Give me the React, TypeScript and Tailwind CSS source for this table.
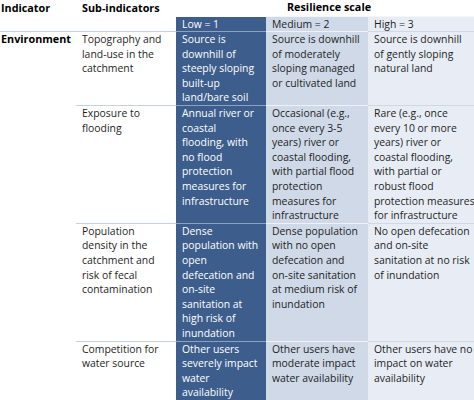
import React from "react";

type Row = {
  indicator?: string;
  sub: string[];
  low: string[];
  medium: string[];
  high: string[];
};

const rows: Row[] = [
  {
    indicator: "Environment",
    sub: ["Topography and", "land-use in the", "catchment"],
    low: ["Source is", "downhill of", "steeply sloping", "built-up", "land/bare soil"],
    medium: ["Source is downhill", "of moderately", "sloping managed", "or cultivated land"],
    high: ["Source is downhill", "of gently sloping", "natural land"],
  },
  {
    sub: ["Exposure to", "flooding"],
    low: ["Annual river or", "coastal", "flooding, with", "no flood", "protection", "measures for", "infrastructure"],
    medium: [
      "Occasional (e.g.,",
      "once every 3-5",
      "years) river or",
      "coastal flooding,",
      "with partial flood",
      "protection",
      "measures for",
      "infrastructure",
    ],
    high: [
      "Rare (e.g., once",
      "every 10 or more",
      "years) river or",
      "coastal flooding,",
      "with partial or",
      "robust flood",
      "protection measures",
      "for infrastructure",
    ],
  },
  {
    sub: ["Population", "density in the", "catchment and", "risk of fecal", "contamination"],
    low: ["Dense", "population with", "open", "defecation and", "on-site", "sanitation at", "high risk of", "inundation"],
    medium: ["Dense population", "with no open", "defecation and", "on-site sanitation", "at medium risk of", "inundation"],
    high: ["No open defecation", "and on-site", "sanitation at no risk", "of inundation"],
  },
  {
    sub: ["Competition for", "water source"],
    low: ["Other users", "severely impact", "water", "availability"],
    medium: ["Other users have", "moderate impact", "water availability"],
    high: ["Other users have no", "impact on water", "availability"],
  },
];

// one line per array entry, wrapping fixed to match the printed table
function Lines({ lines }: { lines: string[] }) {
  return (
    <>
      {lines.map((l, i) => (
        <div key={i} className="whitespace-nowrap">
          {l}
        </div>
      ))}
    </>
  );
}

export default function App() {
  return (
    <div
      className="h-[400px] w-[474px] overflow-hidden bg-white text-[10.4px] leading-[14.6px] text-[#1e1e1e]"
      style={{ fontFamily: '"Open Sans", "Noto Sans", sans-serif' }}
    >
      <table className="w-[474px] table-fixed border-collapse">
        <colgroup>
          <col className="w-[76px]" />
          <col className="w-[100px]" />
          <col className="w-[90px]" />
          <col className="w-[102px]" />
          <col className="w-[106px]" />
        </colgroup>
        <thead>
          <tr className="h-[16px] text-[10.8px] font-bold text-black">
            <th className="p-0 pl-[1px] text-left align-middle">Indicator</th>
            <th className="p-0 pl-[6px] text-left align-middle">Sub-indicators</th>
            <th colSpan={3} className="p-0 pl-[8px] text-center align-middle">
              Resilience scale
            </th>
          </tr>
          <tr className="h-[14px] font-normal">
            <th className="p-0" />
            <th className="p-0" />
            <th className="border-t border-white bg-[#3d5e8c] p-0 pl-[6px] text-left font-normal text-white">
              Low = 1
            </th>
            <th className="border-t border-[#f4f6fa] bg-[#cfd9e7] p-0 pl-[6px] text-left font-normal">Medium = 2</th>
            <th className="border-t border-[#f4f6fa] bg-[#e8edf5] p-0 pl-[6px] text-left font-normal">High = 3</th>
          </tr>
        </thead>
        <tbody>
          {rows.map((r, i) => (
            <tr key={i} className="align-top">
              {i === 0 && (
                <td rowSpan={4} className="border-t border-[#c6d1df] p-0 pl-[1px] text-[10.8px] font-bold text-black">
                  {r.indicator}
                </td>
              )}
              <td className="border-t border-[#c6d1df] p-0 pl-[6px]">
                <Lines lines={r.sub} />
              </td>
              <td className="border-t border-[#8ba2c2] bg-[#3d5e8c] p-0 pl-[6px] text-white">
                <Lines lines={r.low} />
              </td>
              <td className="border-t border-[#eef2f8] bg-[#cfd9e7] p-0 pl-[6px]">
                <Lines lines={r.medium} />
              </td>
              <td className="border-t border-[#cfd8e4] bg-[#e8edf5] p-0 pl-[6px]">
                <Lines lines={r.high} />
              </td>
            </tr>
          ))}
        </tbody>
      </table>
    </div>
  );
}
